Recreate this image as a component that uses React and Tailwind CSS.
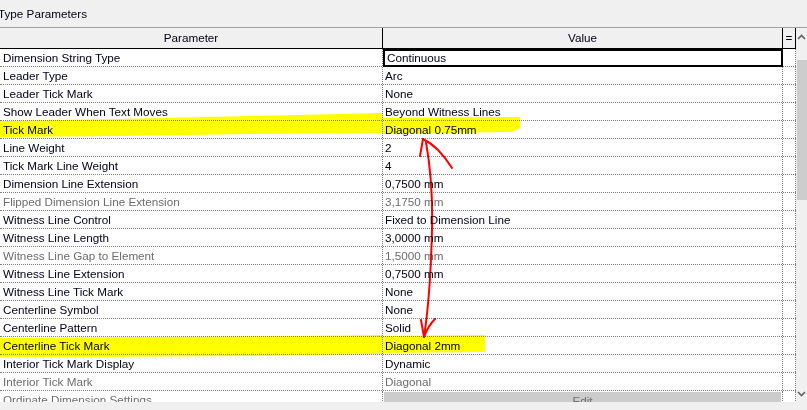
import React from 'react';

const rows = [
  ['Dimension String Type', 'Continuous'],
  ['Leader Type', 'Arc'],
  ['Leader Tick Mark', 'None'],
  ['Show Leader When Text Moves', 'Beyond Witness Lines'],
  ['Tick Mark', 'Diagonal 0.75mm'],
  ['Line Weight', '2'],
  ['Tick Mark Line Weight', '4'],
  ['Dimension Line Extension', '0,7500 mm'],
  ['Flipped Dimension Line Extension', '3,1750 mm', true],
  ['Witness Line Control', 'Fixed to Dimension Line'],
  ['Witness Line Length', '3,0000 mm'],
  ['Witness Line Gap to Element', '1,5000 mm', true],
  ['Witness Line Extension', '0,7500 mm'],
  ['Witness Line Tick Mark', 'None'],
  ['Centerline Symbol', 'None'],
  ['Centerline Pattern', 'Solid'],
  ['Centerline Tick Mark', 'Diagonal 2mm'],
  ['Interior Tick Mark Display', 'Dynamic'],
  ['Interior Tick Mark', 'Diagonal', true],
];

function Row({ name, value, dim, selected }) {
  const tone = dim ? 'text-[#6d6d6d]' : 'text-[#000016]';
  return (
    <div className="flex h-[18px] shrink-0 border-b border-dotted border-[#808080]">
      <div className={`w-[383px] pl-[3px] flex items-center border-r border-dotted border-[#808080] ${tone}`}>
        {name}
      </div>
      {selected ? (
        <div className="w-[400px] flex items-center pl-[2px] border-2 border-black -mb-px">{value}</div>
      ) : (
        <div className={`w-[400px] pl-[2px] flex items-center border-r border-dotted border-[#808080] ${tone}`}>
          {value}
        </div>
      )}
      <div className="w-[13px] border-r border-dotted border-[#808080]" />
    </div>
  );
}

export default function App() {
  return (
    <div className="relative w-[807px] h-[410px] overflow-hidden bg-[#f0f0f0] text-[11.7px] font-['Segoe_UI','Liberation_Sans',sans-serif] text-[#000016]">
      <div className="h-[27px] flex items-center">
        <span className="-ml-[2px]">Type Parameters</span>
      </div>

      <div className="flex h-[375px] border-t border-[#a0a0a0]">
        <div className="w-[796px] bg-white flex flex-col overflow-hidden">
          <div className="flex h-[21px] shrink-0 bg-[#f0f0f0] border-b border-black">
            <div className="w-[383px] flex items-center justify-center border-r border-black">Parameter</div>
            <div className="w-[400px] flex items-center justify-center border-r border-black">Value</div>
            <div className="w-[13px] flex items-center justify-center border-r border-black leading-none">=</div>
          </div>
          {rows.map((r, i) => (
            <Row key={r[0]} name={r[0]} value={r[1]} dim={r[2]} selected={i === 0} />
          ))}
          <div className="flex h-[18px] shrink-0">
            <div className="w-[383px] pl-[3px] flex items-center border-r border-dotted border-[#808080] text-[#6d6d6d]">
              Ordinate Dimension Settings
            </div>
            <div className="w-[400px] pt-px pl-px pr-px border-r border-dotted border-[#808080]">
              <div className="h-full bg-[#cccccc] flex items-center justify-center text-[#6d6d6d]">Edit</div>
            </div>
            <div className="w-[13px] border-r border-dotted border-[#808080]" />
          </div>
        </div>

        <div className="w-[11px] flex flex-col">
          <div className="h-[17px] flex items-center justify-center">
            <svg width="9" height="6" viewBox="0 0 9 6">
              <path d="M1 5 L4.5 1.5 L8 5" fill="none" stroke="#606060" strokeWidth="1.6" />
            </svg>
          </div>
          <div className="flex-1 flex flex-col pl-px">
            <div className="h-[15px]" />
            <div className="h-[140px] bg-[#cdcdcd]" />
          </div>
          <div className="h-[17px] flex items-center justify-center">
            <svg width="9" height="6" viewBox="0 0 9 6">
              <path d="M1 1 L4.5 4.5 L8 1" fill="none" stroke="#606060" strokeWidth="1.6" />
            </svg>
          </div>
        </div>
      </div>

      <svg className="absolute inset-0 pointer-events-none mix-blend-multiply" width="807" height="410" viewBox="0 0 807 410">
        <polygon points="0,121 120,119 250,116 382,113 382,133 250,134 120,136 0,137" fill="#ffff00" />
        <polygon points="383,118 520,117 520,128 512,132 383,134" fill="#ffff00" />
        <polygon points="0,338 150,337 300,336 382,335 382,354 250,356 100,357 0,357" fill="#ffff00" />
        <polygon points="383,336 485,335 485,352 383,353" fill="#ffff00" />
        <g fill="none" stroke="#ff0000" strokeWidth="2" strokeLinecap="round" strokeLinejoin="round">
          <path d="M426,142 C430,165 433,190 432,230 C431,270 429,305 424,337" />
          <path d="M420,156 L423,139" />
          <path d="M423,139 Q438,146 452,168" />
          <path d="M421,320 L424,337 Q428,326 435,319" />
        </g>
      </svg>
    </div>
  );
}
